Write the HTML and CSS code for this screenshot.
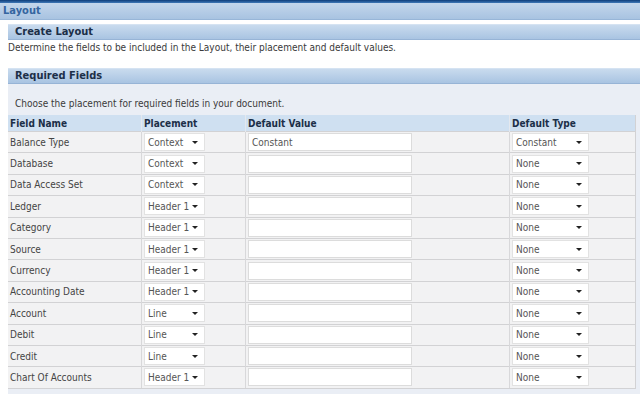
FILE: index.html
```html
<!DOCTYPE html>
<html lang="en">
  <head>
    <meta charset="UTF-8" />
    <meta name="viewport" content="width=device-width, initial-scale=1.0" />
    <title>Layout</title>
    <link rel="stylesheet" href="styles.css">
  </head>
  <body>
    <div class="topbar"></div>
    <div class="page-title">Layout</div>

    <div class="content">
      <div class="section-header">Create Layout</div>
      <p class="desc">Determine the fields to be included in the Layout, their placement and default values.</p>

      <div class="section-header">Required Fields</div>
      <div class="region">
        <p class="hint">Choose the placement for required fields in your document.</p>
        <table class="fields">
          <thead>
            <tr>
              <th class="col-name">Field Name</th>
              <th class="col-place">Placement</th>
              <th class="col-value">Default Value</th>
              <th class="col-type">Default Type</th>
            </tr>
          </thead>
          <tbody id="rows"></tbody>
        </table>
      </div>
    </div>

    <script>
      const fields = [
        ["Balance Type", "Context", "Constant", "Constant"],
        ["Database", "Context", "", "None"],
        ["Data Access Set", "Context", "", "None"],
        ["Ledger", "Header 1", "", "None"],
        ["Category", "Header 1", "", "None"],
        ["Source", "Header 1", "", "None"],
        ["Currency", "Header 1", "", "None"],
        ["Accounting Date", "Header 1", "", "None"],
        ["Account", "Line", "", "None"],
        ["Debit", "Line", "", "None"],
        ["Credit", "Line", "", "None"],
        ["Chart Of Accounts", "Header 1", "", "None"],
      ];

      function selectBox(cls, text) {
        return `<span class="select ${cls}"><span class="select-text">${text}</span><span class="caret"></span></span>`;
      }

      const rows = document.getElementById("rows");
      rows.innerHTML = fields
        .map(
          (f) => `
        <tr>
          <td>${f[0]}</td>
          <td>${selectBox("place", f[1])}</td>
          <td><span class="textbox">${f[2]}</span></td>
          <td>${selectBox("type", f[3])}</td>
        </tr>`
        )
        .join("");
    </script>
  </body>
</html>
```

FILE: styles.css
```css
body {
  font-family: Tahoma, "DejaVu Sans Condensed", "DejaVu Sans", sans-serif;
  font-size: 10px;
  color: #333;
  margin: 0;
  background: #fff;
}
.topbar {
  height: 3px;
  background: linear-gradient(#0d3d7a, #3f78b8);
}
.page-title {
  height: 16px;
  line-height: 16px;
  padding-left: 3px;
  font-weight: bold;
  font-size: 11px;
  color: #3465a0;
  background: linear-gradient(#c3d6ec, #a8c3e1);
  border-bottom: 1px solid #98b6d8;
}
.content {
  padding-left: 8px;
  padding-top: 4px;
}
.section-header {
  height: 14px;
  line-height: 14px;
  padding-left: 7px;
  font-weight: bold;
  font-size: 11px;
  color: #1c2f48;
  background: linear-gradient(#c9dbee, #a9c4e2);
  border-top: 1px solid #d5e3f2;
  border-bottom: 1px solid #97b4d6;
}
.desc {
  margin: 0;
  padding: 2px 0 0 0;
  height: 26px;
  color: #3a3a3a;
}
.region {
  background: #eaeef5;
  padding: 14px 4px 6px 0;
}
.hint {
  margin: 0 0 6px 7px;
  color: #3a3a3a;
}
.fields {
  border-collapse: collapse;
  width: 628px;
}
.fields th {
  background: #cfe0f1;
  color: #1c2f48;
  text-align: left;
  font-size: 10px;
  height: 16px;
  padding: 0 0 0 2px;
  border-left: 1px solid #e4e8ee;
}
.fields td {
  background: #f2f2f3;
  height: 20.4px;
  padding: 0 0 0 2px;
  border-top: 1px solid #d2d2d4;
  border-left: 1px solid #d8d8da;
  color: #444;
}
.fields tr > :first-child {
  border-left: none;
}
.fields tr:last-child td {
  border-bottom: 1px solid #d2d2d4;
}
.fields tr > :last-child {
  border-right: 1px solid #d2d2d4;
}
.col-name {
  width: 131px;
}
.col-place {
  width: 101px;
}
.col-value {
  width: 261px;
}
.select {
  display: flex;
  align-items: center;
  justify-content: space-between;
  box-sizing: border-box;
  height: 18px;
  background: #fff;
  border: 1px solid #e2e2e2;
  padding: 0 6px 0 3px;
  color: #555;
}
.select.place {
  width: 61px;
}
.select.type {
  width: 77px;
}
.caret {
  width: 0;
  height: 0;
  border-left: 3px solid transparent;
  border-right: 3px solid transparent;
  border-top: 3px solid #222;
}
.textbox {
  display: flex;
  align-items: center;
  box-sizing: border-box;
  width: 164px;
  height: 18px;
  background: #fff;
  border: 1px solid #dcdcdc;
  padding-left: 3px;
  color: #555;
}
```
